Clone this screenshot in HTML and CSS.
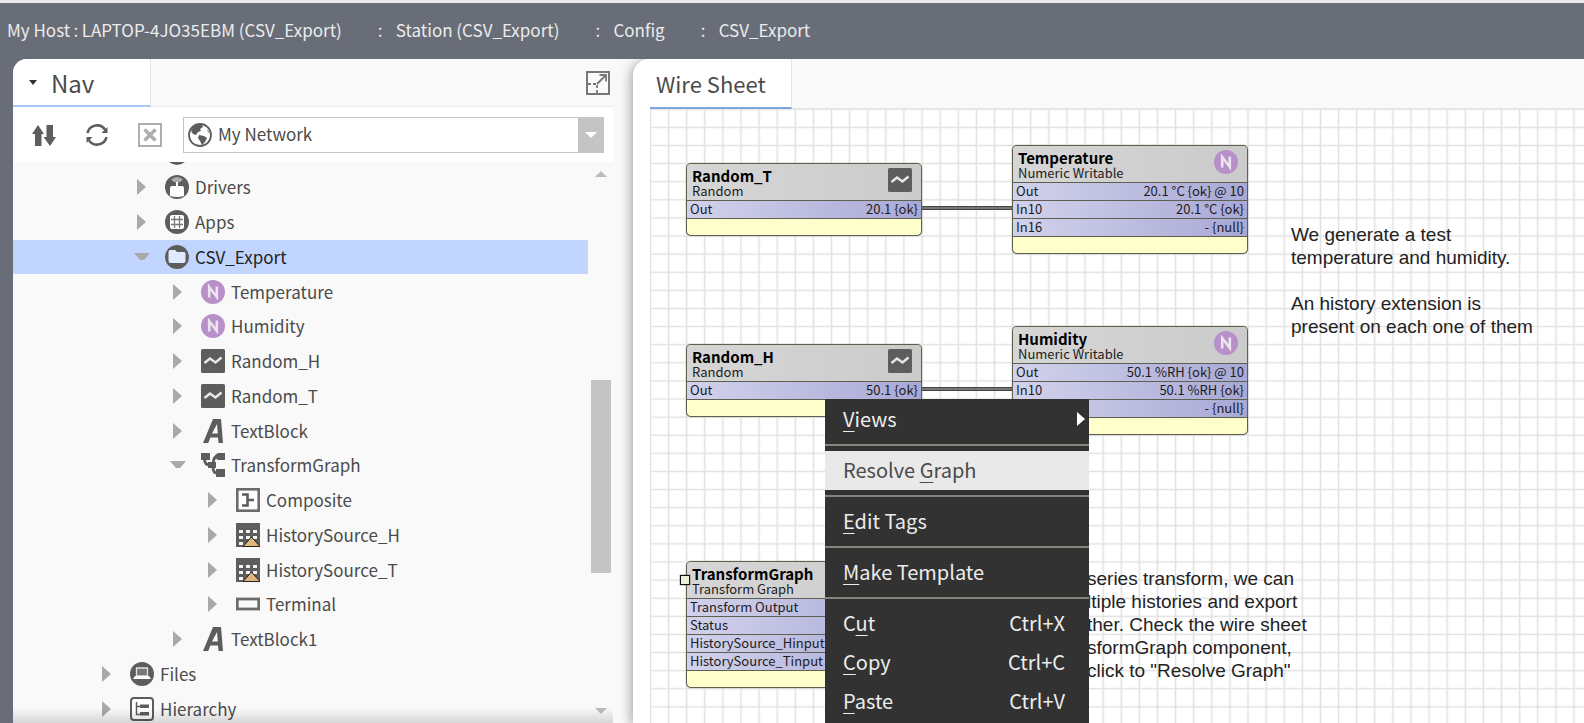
FILE: index.html
```html
<!DOCTYPE html>
<html lang="en">
<head>
<meta charset="utf-8">
<title>Wire Sheet - CSV_Export</title>
<link rel="stylesheet" href="styles.css">
</head>
<body>
<svg class="sprite" aria-hidden="true">
  <symbol id="i-drivers" viewBox="0 0 24 24"><circle cx="12" cy="12" r="12" fill="#5c5d5c"/><path d="M6 4.500Q12 -.5 18 4.500Q16 7 13 7.500H11Q8 7 6 4.500Z" fill="#aeaeae"/><path d="M11 7H13V11H17Q19 11 19 13V21Q12 23 5 21V13Q5 11 7 11H11Z" fill="#fff"/></symbol>
  <symbol id="i-apps" viewBox="0 0 24 24"><circle cx="12" cy="12" r="12" fill="#5c5d5c"/><rect x="5" y="5" width="14" height="14" rx="2" fill="#fff"/><path d="M9.500 6V18M14.500 6V18M6 9.500H18M6 14.500H18" stroke="#777" stroke-width="1.300"/></symbol>
  <symbol id="i-folder" viewBox="0 0 24 24"><circle cx="12" cy="12" r="12" fill="#5c5d5c"/><path d="M3.500 7Q3.500 5 5.500 5H10L12 7H19Q20.500 7 20.500 9V16Q20.500 18 18.500 18H5.500Q3.500 18 3.500 16Z" fill="#dfe9ff"/></symbol>
  <symbol id="i-numeric" viewBox="0 0 24 24"><circle cx="12" cy="12" r="12" fill="#b78fc9"/><path d="M8.200 17.500V7L15.800 17V6.500" fill="none" stroke="#ece5f0" stroke-width="2.600"/></symbol>
  <symbol id="i-random" viewBox="0 0 24 24"><rect width="24" height="24" rx="1.500" fill="#5c5d5c"/><path d="M3.500 14L9 9.500L14.500 13.500L20.500 8.500" fill="none" stroke="#e8e8e8" stroke-width="2.400"/></symbol>
  <symbol id="i-text" viewBox="0 0 24 24"><path d="M2 24L12 0H20L22 24H17.500L17 18.500H9.500L7.200 24ZM11 14.500H16.800L16 5Z" fill="#5c5d5c" fill-rule="evenodd"/></symbol>
  <symbol id="i-graph" viewBox="0 0 24 24"><path d="M0 0H9V7H0ZM17 0H24V7H17L14 5V2ZM15 16H24V24H15ZM7 9H15V15H7Z" fill="#5c5d5c"/><path d="M3.500 6Q3.500 12 9 12M17 3.500Q12.500 3.500 12.500 9M12 14Q12 20 16 20" fill="none" stroke="#5c5d5c" stroke-width="2.800"/></symbol>
  <symbol id="i-composite" viewBox="0 0 24 24"><rect x="1.300" y="1.300" width="21.400" height="21.400" fill="#fff" stroke="#6b6c6b" stroke-width="2.600"/><path d="M6 6.500H11.500V17.500H6M11.500 12H18" fill="none" stroke="#5c5d5c" stroke-width="2.600"/></symbol>
  <symbol id="i-history" viewBox="0 0 24 24"><rect width="24" height="24" fill="#5c5d5c"/><path d="M3 7H7V10H3ZM10 7H14V10H10ZM17 7H21V10H17ZM3 13H7V16H3ZM10 13H14V16H10ZM17 13H21V16H17ZM3 19H7V22H3Z" fill="#f4f4f4"/><path d="M7 23.500L15.500 14L24 23.500Z" fill="#dfb57e" stroke="#222" stroke-width="1"/></symbol>
  <symbol id="i-terminal" viewBox="0 0 24 24"><rect x="1.300" y="7" width="21.400" height="10" fill="#fafafa" stroke="#6b6c6b" stroke-width="2.800"/></symbol>
  <symbol id="i-files" viewBox="0 0 24 24"><circle cx="12" cy="12" r="12" fill="#5c5d5c"/><path d="M6.500 6H17.500V14H6.500Z" fill="#777" stroke="#e4e4e4" stroke-width="1.300"/><path d="M5 14H19L21 17H3Z" fill="#fff"/></symbol>
  <symbol id="i-hierarchy" viewBox="0 0 24 24"><rect x="1" y="1" width="22" height="22" rx="3" fill="#fff" stroke="#5c5d5c" stroke-width="2"/><path d="M6.500 5V17.500H10M6.500 9.500H10" fill="none" stroke="#5c5d5c" stroke-width="1.500"/><path d="M10 7.500H19V11H10ZM10 15H19V18.500H10Z" fill="#5c5d5c"/></symbol>
  <symbol id="i-shut" viewBox="0 0 16 16"><path d="M3 0L12 8L3 16Z" fill="#a9a9a9"/></symbol>
  <symbol id="i-open" viewBox="0 0 16 16"><path d="M0 4H16L10 11H6Z" fill="#a9a9a9"/></symbol>
</svg>

<nav class="breadcrumb" aria-label="Location">
  <a href="#">My Host&#8201;:&#8201;LAPTOP-4JO35EBM (CSV_Export)</a>
  <span class="colon">:</span><a href="#">Station (CSV_Export)</a>
  <span class="colon">:</span><a href="#">Config</a>
  <span class="colon">:</span><a href="#">CSV_Export</a>
</nav>

<div class="workspace">
  <aside class="side">
    <div class="side-tabs">
      <button class="side-tab"><svg width="8" height="5" viewBox="0 0 8 5"><path d="M0 0H8L4 5Z" fill="#333"/></svg>Nav</button>
      <button class="icon-button" aria-label="Detach panel"><svg width="24" height="24" viewBox="0 0 24 24" fill="none" stroke="#777"><rect x="1" y="1" width="22" height="22" stroke-width="2"/><path d="M11 13L20 4M13.500 4H20V10.500" stroke-width="1.800"/><path d="M2 13H11V22" stroke-width="1.800" stroke-dasharray="3 2"/></svg></button>
    </div>
    <div class="toolbar">
      <button class="icon-button" aria-label="Sort"><svg width="24" height="24" viewBox="0 0 24 24"><path d="M6 2L12 11H9.500V23H3V11H0ZM14.500 2H21V14H24L18 23L11.500 14H14.500Z" fill="#5c5d5c"/></svg></button>
      <button class="icon-button" aria-label="Refresh"><svg width="24" height="24" viewBox="0 0 24 24"><path d="M2.500 10A9.700 9.700 0 0 1 20.500 7.500M21.500 14A9.700 9.700 0 0 1 3.500 16.500" fill="none" stroke="#5c5d5c" stroke-width="2.600"/><path d="M22.500 4V10H16.500ZM1.500 20V14H7.500Z" fill="#5c5d5c"/></svg></button>
      <button class="icon-button" aria-label="Stop"><svg width="24" height="24" viewBox="0 0 24 24" fill="none" stroke="#aeaeae"><rect x="1" y="1" width="22" height="22" stroke-width="2"/><path d="M6.500 6.500L17.500 17.500M17.500 6.500L6.500 17.500" stroke-width="3.500"/></svg></button>
      <div class="picker">
        <svg width="24" height="24" viewBox="0 0 24 24"><circle cx="12" cy="12" r="11" fill="#fff" stroke="#5c5d5c" stroke-width="1.800"/><path d="M5 4Q9 1 14 2L15 4L12 6L13 8L10 9L8 12L5 11L3 8ZM11 12L16 13L19 15L17 19L14 22L12 18L10 15ZM19 6L22 10L20 9Z" fill="#5c5d5c"/></svg>
        <select aria-label="Navigation root"><option>My Network</option></select>
        <span class="picker-arrow"><svg width="12" height="6" viewBox="0 0 12 6"><path d="M0 0H12L6 6Z" fill="#fff"/></svg></span>
      </div>
    </div>
    <div class="tree-wrap">
      <ul class="tree">
        <li class="lv1"><svg class="tw"><use href="#i-shut"/></svg><svg class="ic"><use href="#i-drivers"/></svg>Drivers</li>
        <li class="lv1"><svg class="tw"><use href="#i-shut"/></svg><svg class="ic"><use href="#i-apps"/></svg>Apps</li>
        <li class="lv1 selected"><svg class="tw"><use href="#i-open"/></svg><svg class="ic"><use href="#i-folder"/></svg>CSV_Export</li>
        <li class="lv2"><svg class="tw"><use href="#i-shut"/></svg><svg class="ic"><use href="#i-numeric"/></svg>Temperature</li>
        <li class="lv2"><svg class="tw"><use href="#i-shut"/></svg><svg class="ic"><use href="#i-numeric"/></svg>Humidity</li>
        <li class="lv2"><svg class="tw"><use href="#i-shut"/></svg><svg class="ic"><use href="#i-random"/></svg>Random_H</li>
        <li class="lv2"><svg class="tw"><use href="#i-shut"/></svg><svg class="ic"><use href="#i-random"/></svg>Random_T</li>
        <li class="lv2"><svg class="tw"><use href="#i-shut"/></svg><svg class="ic"><use href="#i-text"/></svg>TextBlock</li>
        <li class="lv2"><svg class="tw"><use href="#i-open"/></svg><svg class="ic"><use href="#i-graph"/></svg>TransformGraph</li>
        <li class="lv3"><svg class="tw"><use href="#i-shut"/></svg><svg class="ic"><use href="#i-composite"/></svg>Composite</li>
        <li class="lv3"><svg class="tw"><use href="#i-shut"/></svg><svg class="ic"><use href="#i-history"/></svg>HistorySource_H</li>
        <li class="lv3"><svg class="tw"><use href="#i-shut"/></svg><svg class="ic"><use href="#i-history"/></svg>HistorySource_T</li>
        <li class="lv3"><svg class="tw"><use href="#i-shut"/></svg><svg class="ic"><use href="#i-terminal"/></svg>Terminal</li>
        <li class="lv2"><svg class="tw"><use href="#i-shut"/></svg><svg class="ic"><use href="#i-text"/></svg>TextBlock1</li>
        <li class="lv0"><svg class="tw"><use href="#i-shut"/></svg><svg class="ic"><use href="#i-files"/></svg>Files</li>
        <li class="lv0"><svg class="tw"><use href="#i-shut"/></svg><svg class="ic"><use href="#i-hierarchy"/></svg>Hierarchy</li>
      </ul>
      <div class="scrollbar">
        <svg width="12" height="6" viewBox="0 0 12 6"><path d="M0 6H12L6 0Z" fill="#bbb"/></svg>
        <div class="track"><div class="thumb"></div></div>
        <svg width="12" height="6" viewBox="0 0 12 6"><path d="M0 0H12L6 6Z" fill="#bbb"/></svg>
      </div>
      <svg class="scrolled-icon" width="16" height="3" viewBox="0 0 16 3"><path d="M0 0H16Q8 6 0 0Z" fill="#5c5d5c"/></svg>
    </div>
  </aside>

  <main class="sheet">
    <div class="sheet-tabs"><button class="sheet-tab">Wire Sheet</button><div class="sheet-strip"></div></div>
    <div class="canvas">
      <svg class="grid-lines" aria-hidden="true">
        <defs><pattern id="grid" x="9.400" y="9.300" width="18.110" height="18.110" patternUnits="userSpaceOnUse"><path d="M9.100 0V18.110M0 9.100H18.110" stroke="#e1e1e1" stroke-width="1.500"/></pattern></defs>
        <rect width="100%" height="100%" fill="url(#grid)"/>
      </svg>
      <div class="wire wire-t"></div>
      <div class="wire wire-h"></div>

      <section class="node random-t">
        <header><div><h2>Random_T</h2><p>Random</p></div><svg class="ic"><use href="#i-random"/></svg></header>
        <div class="slot"><span>Out</span><span>20.1 {ok}</span></div>
        <footer></footer>
      </section>
      <section class="node temperature">
        <header><div><h2>Temperature</h2><p>Numeric Writable</p></div><svg class="ic"><use href="#i-numeric"/></svg></header>
        <div class="slot"><span>Out</span><span>20.1 °C {ok} @ 10</span></div>
        <div class="slot"><span>In10</span><span>20.1 °C {ok}</span></div>
        <div class="slot"><span>In16</span><span>- {null}</span></div>
        <footer></footer>
      </section>
      <section class="node random-h">
        <header><div><h2>Random_H</h2><p>Random</p></div><svg class="ic"><use href="#i-random"/></svg></header>
        <div class="slot"><span>Out</span><span>50.1 {ok}</span></div>
        <footer></footer>
      </section>
      <section class="node humidity">
        <header><div><h2>Humidity</h2><p>Numeric Writable</p></div><svg class="ic"><use href="#i-numeric"/></svg></header>
        <div class="slot"><span>Out</span><span>50.1 %RH {ok} @ 10</span></div>
        <div class="slot"><span>In10</span><span>50.1 %RH {ok}</span></div>
        <div class="slot"><span></span><span>- {null}</span></div>
        <footer></footer>
      </section>
      <section class="node transform">
        <header><div><h2>TransformGraph</h2><p>Transform Graph</p></div></header>
        <div class="slot"><span>Transform Output</span></div>
        <div class="slot"><span>Status</span></div>
        <div class="slot"><span>HistorySource_Hinput</span></div>
        <div class="slot"><span>HistorySource_Tinput</span></div>
        <footer></footer>
        <i class="handle"></i>
      </section>

      <p class="note note-top">We generate a test<br>temperature and humidity.<br><br>An history extension is<br>present on each one of them</p>
      <p class="note note-bottom">series transform, we can<br>ltiple histories and export<br>ther. Check the wire sheet<br>sformGraph component,<br>click to "Resolve Graph"</p>

      <div class="menu" role="menu">
        <button role="menuitem"><span><u>V</u>iews</span><svg class="more" width="8" height="14" viewBox="0 0 8 14"><path d="M0 0L8 7L0 14Z" fill="#fff"/></svg></button>
        <hr>
        <button role="menuitem" class="active"><span>Resolve <u>G</u>raph</span></button>
        <hr>
        <button role="menuitem"><span><u>E</u>dit Tags</span></button>
        <hr>
        <button role="menuitem"><span><u>M</u>ake Template</span></button>
        <hr>
        <button role="menuitem"><span>C<u>u</u>t</span><kbd>Ctrl+X</kbd></button>
        <button role="menuitem"><span><u>C</u>opy</span><kbd>Ctrl+C</kbd></button>
        <button role="menuitem"><span><u>P</u>aste</span><kbd>Ctrl+V</kbd></button>
      </div>
    </div>
  </main>
</div>
</body>
</html>
```
FILE: styles.css
```css
* { box-sizing: border-box; }
body {
  margin: 0;
  height: 100vh;
  display: flex;
  flex-direction: column;
  overflow: hidden;
  background: #686d77;
  border-top: 3px solid #e9e9e9;
  color: #4b4b4b;
  font-family: "Noto Sans CJK SC", "Noto Sans", sans-serif;
  font-size: 17px;
}
button, select { font: inherit; color: inherit; border: 0; background: none; padding: 0; margin: 0; }
svg { display: block; flex: none; }
.sprite { position: absolute; width: 0; height: 0; }
.ic { width: 24px; height: 24px; }

.breadcrumb {
  display: flex;
  align-items: center;
  height: 56px;
  flex: none;
  padding: 0 0 3px 7px;
  color: #ececec;
  white-space: pre;
}
.breadcrumb a { color: inherit; text-decoration: none; }
.colon { width: 18px; margin-left: 36px; }

.workspace {
  flex: 1;
  min-height: 0;
  display: grid;
  grid-template-columns: 633px 1fr;
  overflow: hidden;
}

.side {
  margin-left: 13px;
  margin-right: -16px;
  padding-right: 36px;
  min-height: 0;
  display: flex;
  flex-direction: column;
  background: #f9f9f9;
  border-top-left-radius: 14px;
  overflow: hidden;
}
.side-tabs {
  display: flex;
  justify-content: space-between;
  height: 48px;
  flex: none;
  padding-right: 3px;
  border-bottom: 1px solid #ececec;
}
.side-tab {
  display: flex;
  align-items: center;
  gap: 14px;
  width: 138px;
  margin-bottom: -1px;
  padding-left: 16px;
  background: #fff;
  border-right: 1px solid #e4e4e4;
  border-bottom: 2px solid #a6c8f4;
  font-size: 24px;
}
.toolbar {
  display: flex;
  align-items: center;
  gap: 29px;
  height: 55px;
  flex: none;
  padding: 0 9px 0 19px;
  background: #fff;
}
.picker {
  flex: 1;
  display: flex;
  align-items: center;
  height: 36px;
  margin-left: -8px;
  padding-left: 4px;
  border: 1px solid #c4c4c4;
}
.picker select { flex: 1; height: 34px; padding: 0 0 2px 6px; appearance: none; }
.picker-arrow {
  display: grid;
  place-items: center;
  width: 25px;
  height: 36px;
  background: #c4c4c4;
}
.tree-wrap { flex: 1; min-height: 0; display: flex; position: relative; }
.scrolled-icon { position: absolute; left: 156px; top: 0; }
.tree {
  flex: 1;
  display: grid;
  grid-template-rows: repeat(16, minmax(34px, 1fr));
  margin: 0 0 -3px;
  padding: 8px 0 0;
  list-style: none;
}
.tree li { display: flex; align-items: center; line-height: 24px; }
.tree .tw { width: 16px; height: 16px; margin-right: 15px; }
.tree .ic { margin-right: 6px; }
.lv0 { padding-left: 86px; }
.lv1 { padding-left: 121px; }
.lv2 { padding-left: 157px; }
.lv3 { padding-left: 192px; }
.tree .selected { background: #c1d5ff; color: #222; }
.scrollbar {
  width: 25px;
  display: flex;
  flex-direction: column;
  align-items: center;
  padding: 9px 0;
}
.track { flex: 1; width: 20px; padding-top: 203px; }
.thumb { height: 193px; background: #c4c4c4; }
.side::after {
  content: "";
  position: absolute;
  left: 13px;
  bottom: 0;
  width: 600px;
  height: 15px;
  background: linear-gradient(rgba(0, 0, 0, 0), rgba(0, 0, 0, .14));
}

.sheet {
  position: relative;
  min-width: 0;
  min-height: 0;
  display: flex;
  flex-direction: column;
  padding-left: 17px;
  background: #fff;
  border-top-left-radius: 16px;
  box-shadow: -2px 2px 12px rgba(0, 0, 0, .35);
}
.sheet-tabs { display: flex; height: 50px; flex: none; }
.sheet-tab {
  width: 142px;
  padding: 0 0 0 6px;
  text-align: left;
  border-bottom: 2px solid #7da6de;
  border-right: 1px solid #e4e4e4;
  font-size: 22px;
}
.sheet-strip { flex: 1; background: #f9f9f9; border-bottom: 1px solid #e6e6e6; }

.canvas { position: relative; flex: 1; min-height: 0; }
.grid-lines { position: absolute; width: 100%; height: 100%; }

.node {
  position: absolute;
  width: 236px;
  border: 1px solid #5d604f;
  border-radius: 5px;
  background: #ffc;
  color: #1c1c1c;
  font-size: 13px;
  line-height: 15px;
  box-shadow: 0 0 1px #5d604f;
}
.node header {
  display: flex;
  justify-content: space-between;
  height: 36px;
  padding: 4px 9px 0 5px;
  background: linear-gradient(90deg, #d6d6d6, #cbcbcb);
  border-radius: 4px 4px 0 0;
}
.node h2, .node p { margin: 0; font-size: 13px; line-height: 15px; }
.node h2 { color: #000; font-size: 15px; }
.slot {
  display: flex;
  justify-content: space-between;
  height: 18px;
  padding: 0 3px;
  line-height: 16px;
  border-top: 1px solid #5d604f;
  background: linear-gradient(90deg, #d2d2ec, #a8a8d6);
}
.node footer { height: 17px; border-top: 1px solid #5d604f; }
.random-t { left: 36px; top: 54px; }
.temperature { left: 362px; top: 36px; }
.random-h { left: 36px; top: 235px; }
.humidity { left: 362px; top: 217px; }
.transform { left: 36px; top: 452px; }
.handle {
  position: absolute;
  left: -7px;
  top: 13px;
  width: 10px;
  height: 10px;
  border: 1px solid #111;
  box-shadow: 0 0 1px #111;
  background: #efefdc;
}
.wire {
  position: absolute;
  left: 272px;
  width: 90px;
  height: 4px;
  background: #777;
  border: solid #444;
  border-width: 1px 0;
}
.wire-t { top: 97px; }
.wire-h { top: 278px; }

.note {
  position: absolute;
  margin: 0;
  color: #222;
  font-family: "Liberation Sans", sans-serif;
  font-size: 19px;
  line-height: 23px;
  white-space: nowrap;
}
.note-top { left: 641px; top: 114px; }
.note-bottom { left: 437px; top: 458px; }

.menu {
  position: absolute;
  left: 175px;
  top: 290px;
  width: 264px;
  display: flex;
  flex-direction: column;
  padding: 1px 0 8px;
  background: #323232;
  color: #ececec;
  font-size: 20px;
}
.menu button {
  display: flex;
  justify-content: space-between;
  align-items: center;
  height: 39px;
  padding: 0 24px 1px 18px;
  line-height: 30px;
}
.menu u { text-underline-offset: 4px; text-decoration-thickness: 1px; text-decoration-skip-ink: none; }
.menu kbd { font: inherit; }
.menu .more { margin-right: -20px; }
.menu hr { width: 100%; height: 2px; margin: 5px 0; border: 0; background: #85857d; }
.menu .active { background: #e9e9e9; color: #4b4b4b; }
```
